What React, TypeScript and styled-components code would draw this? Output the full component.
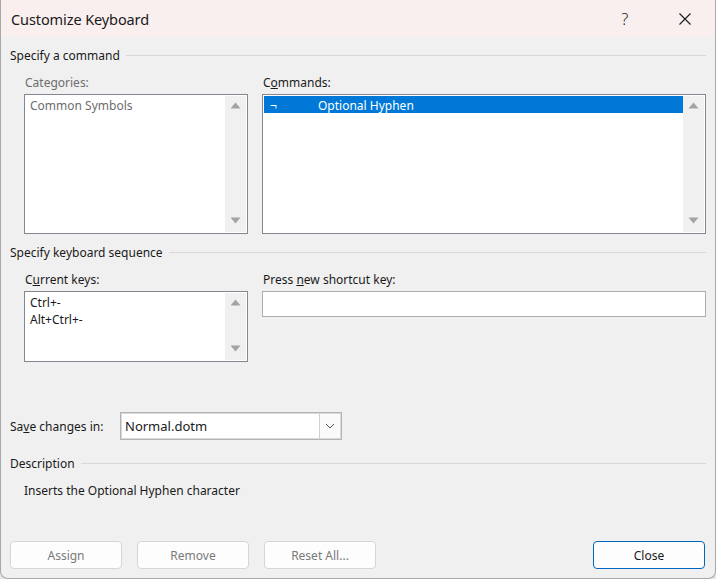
import styled, {createGlobalStyle} from 'styled-components';

const face = '#f0f0f0';
const text = '#1a1a1a';
const dim = '#6d6d6d';
const rule = '#d8d8d8';
const listBorder = '#828790';
const accent = '#0078d7';

const GlobalStyle = createGlobalStyle`
  html, body {
    margin: 0;
    padding: 0;
    background: #e4e4e4;
  }
  body {
    font-family: "Noto Sans", "Open Sans", sans-serif;
    font-size: 12px;
    color: ${text};
  }
`;

export default function App() {
  return (
    <>
      <GlobalStyle/>
      <Window>
        <TitleBar>
          <Title>Customize Keyboard</Title>
          <HelpButton>?</HelpButton>
          <CloseButton>
            <svg width="12" height="12" viewBox="0 0 12 12">
              <path d="M0.5 0.5 L11.5 11.5 M11.5 0.5 L0.5 11.5" stroke="#1a1a1a" strokeWidth="1.1" fill="none"/>
            </svg>
          </CloseButton>
        </TitleBar>

        <Body>
          <Section>Specify a command</Section>
          <Columns>
            <Column $width={224}>
              <Label $disabled>Categories:</Label>
              <ListBox $height={140}>
                <Items>
                  <Item $disabled>Common Symbols</Item>
                </Items>
                <ScrollBar/>
              </ListBox>
            </Column>
            <Column $width={444}>
              <Label>C<u>o</u>mmands:</Label>
              <ListBox $height={140}>
                <Items>
                  <Item $selected>
                    <Glyph>¬</Glyph>Optional Hyphen
                  </Item>
                </Items>
                <ScrollBar/>
              </ListBox>
            </Column>
          </Columns>

          <Section $top={11}>Specify keyboard sequence</Section>
          <Columns>
            <Column $width={224}>
              <Label>C<u>u</u>rrent keys:</Label>
              <ListBox $height={71}>
                <Items>
                  <Item>Ctrl+-</Item>
                  <Item>Alt+Ctrl+-</Item>
                </Items>
                <ScrollBar/>
              </ListBox>
            </Column>
            <Column $width={444}>
              <Label>Press <u>n</u>ew shortcut key:</Label>
              <TextBox/>
            </Column>
          </Columns>

          <SaveRow>
            <SaveLabel>Sa<u>v</u>e changes in:</SaveLabel>
            <Combo>
              <ComboValue>Normal.dotm</ComboValue>
              <ComboButton>
                <svg width="10" height="6" viewBox="0 0 10 6">
                  <path d="M1 1 L5 5 L9 1" stroke="#555" strokeWidth="1" fill="none"/>
                </svg>
              </ComboButton>
            </Combo>
          </SaveRow>

          <Section $top={16}>Description</Section>
          <Description>Inserts the Optional Hyphen character</Description>

          <Buttons>
            <Button disabled>Assign</Button>
            <Button disabled>Remove</Button>
            <Button disabled>Reset All...</Button>
            <Spacer/>
            <Button $default>Close</Button>
          </Buttons>
        </Body>
      </Window>
    </>
  );
}

function ScrollBar() {
  return (
    <Track>
      <svg width="11" height="7" viewBox="0 0 11 7">
        <path d="M0.5 6.5 L5.5 0.5 L10.5 6.5 Z" fill="#a3a3a3"/>
      </svg>
      <svg width="11" height="7" viewBox="0 0 11 7">
        <path d="M0.5 0.5 L5.5 6.5 L10.5 0.5 Z" fill="#a3a3a3"/>
      </svg>
    </Track>
  );
}

const Window = styled.div`
  box-sizing: border-box;
  width: 716px;
  height: 579px;
  display: flex;
  flex-direction: column;
  background: ${face};
  border: 1px solid #a8a8a8;
  border-top: 0;
  border-radius: 0 0 8px 8px;
  overflow: hidden;
`;

const TitleBar = styled.div`
  height: 37px;
  flex: none;
  display: flex;
  align-items: center;
  background: #f9efef;
`;

const Title = styled.div`
  flex: 1;
  padding-left: 10px;
  font-size: 14.5px;
  letter-spacing: -0.1px;
  color: ${text};
`;

const HelpButton = styled.div`
  width: 20px;
  height: 37px;
  display: flex;
  align-items: center;
  justify-content: center;
  font-size: 16px;
  font-weight: 300;
  margin-right: 27px;
`;

const CloseButton = styled.div`
  width: 46px;
  height: 37px;
  display: flex;
  align-items: center;
  justify-content: center;
  margin-right: 7px;
`;

const Body = styled.div`
  flex: 1;
  display: flex;
  flex-direction: column;
  padding: 11px 9px 9px;
`;

const Section = styled.div<{$top?: number}>`
  display: flex;
  align-items: center;
  gap: 6px;
  height: 16px;
  line-height: 18px;
  margin-top: ${({$top}) => $top ?? 0}px;

  &::after {
    content: '';
    flex: 1;
    height: 1px;
    margin-top: -1px;
    background: ${rule};
  }
`;

const Columns = styled.div`
  display: flex;
  gap: 14px;
  padding-left: 14px;
  margin-top: 10px;
`;

const Column = styled.div<{$width: number}>`
  width: ${({$width}) => $width}px;
  display: flex;
  flex-direction: column;
`;

const Label = styled.div<{$disabled?: boolean}>`
  height: 16px;
  line-height: 18px;
  margin-bottom: 4px;
  padding-left: 1px;
  color: ${({$disabled}) => $disabled ? dim : text};
`;

const ListBox = styled.div<{$height: number}>`
  box-sizing: border-box;
  height: ${({$height}) => $height}px;
  display: flex;
  background: #fff;
  border: 1px solid ${listBorder};
`;

const Items = styled.div`
  flex: 1;
  padding: 1px 0 0 1px;
`;

const Item = styled.div<{$selected?: boolean; $disabled?: boolean}>`
  height: 17px;
  line-height: 19px;
  padding-left: 4px;
  white-space: nowrap;
  overflow: hidden;
  background: ${({$selected}) => $selected ? accent : 'transparent'};
  color: ${({$selected, $disabled}) => $selected ? '#fff' : $disabled ? dim : text};
`;

const Glyph = styled.span`
  display: inline-block;
  width: 48px;
  padding-left: 2px;
`;

const Track = styled.div`
  width: 21px;
  margin: 1px 1px 1px 0;
  display: flex;
  flex-direction: column;
  align-items: center;
  justify-content: space-between;
  padding: 6px 0 8px;
  background: ${face};
`;

const TextBox = styled.div`
  box-sizing: border-box;
  height: 26px;
  background: #fff;
  border: 1px solid #adadad;
`;

const SaveRow = styled.div`
  display: flex;
  align-items: center;
  margin-top: 50px;
`;

const SaveLabel = styled.span`
  width: 110px;
  padding-top: 1px;
`;

const Combo = styled.div`
  box-sizing: border-box;
  width: 222px;
  height: 28px;
  display: flex;
  background: #fff;
  border: 1px solid #b4b4b4;
  box-shadow: inset 0 0 0 1px #d9d9d9;
`;

const ComboValue = styled.div`
  flex: 1;
  padding-left: 4px;
  line-height: 27px;
  font-size: 13px;
`;

const ComboButton = styled.div`
  width: 20px;
  display: flex;
  align-items: center;
  justify-content: center;
  background: #fafafa;
  border-left: 1px solid #d0d0d0;
  margin: 1px 1px 1px 0;
`;

const Description = styled.div`
  margin-top: 10px;
  padding-left: 14px;
  line-height: 18px;
`;

const Buttons = styled.div`
  margin-top: auto;
  display: flex;
  gap: 15px;
  padding-right: 1px;
`;

const Spacer = styled.div`
  flex: 1;
`;

const Button = styled.button<{$default?: boolean}>`
  box-sizing: border-box;
  width: 112px;
  height: 28px;
  font-family: inherit;
  font-size: 12px;
  border-radius: 4px;
  background: #fdfdfd;
  border: 1px solid ${({$default}) => $default ? '#0067c0' : '#d6d6d6'};
  color: ${text};
  padding: 0;

  &:disabled {
    color: #7a7a7a;
  }
`;
